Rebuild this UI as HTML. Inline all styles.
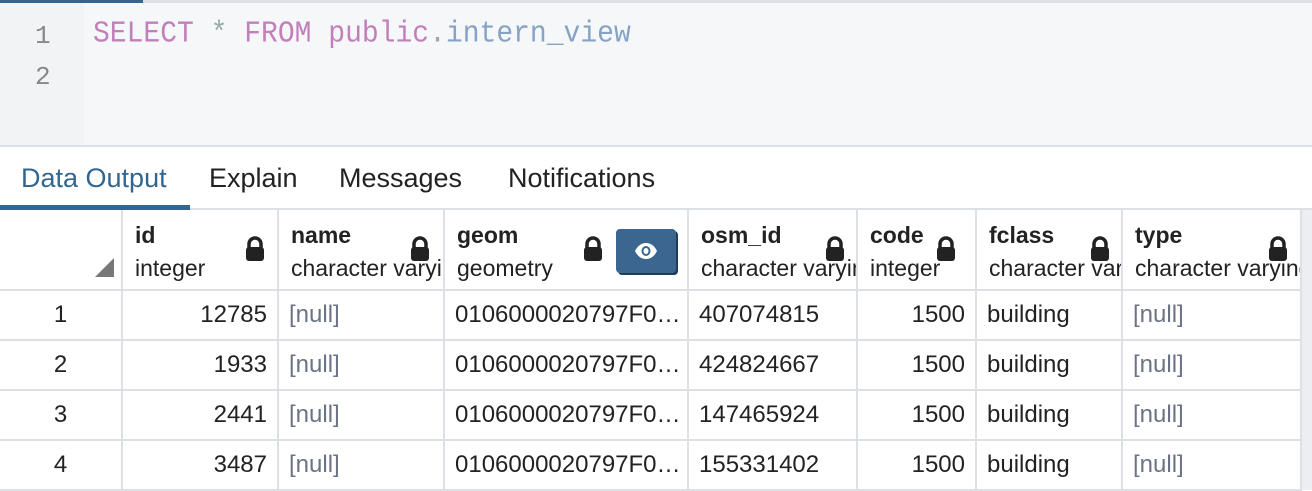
<!DOCTYPE html>
<html><head><style>
*{margin:0;padding:0;box-sizing:border-box}
body{width:1312px;height:490px;overflow:hidden;background:#fff;font-family:"Liberation Sans",sans-serif;position:relative}
#ed{position:absolute;left:0;top:0;width:1312px;height:147px;background:#f6f7f9;border-top:3px solid #dde0e5;border-bottom:2px solid #dde0e5}
#ed .topbar{position:absolute;left:0;top:-3px;width:143px;height:3px;background:#326690}
#gut{position:absolute;left:0;top:0;width:84px;height:142px;background:#f2f3f5}
.ln{position:absolute;left:35px;font:26px "Liberation Mono",monospace;color:#888}
#code{position:absolute;left:93px;top:14px;font:28px/36px "Liberation Mono",monospace;color:#9aa;white-space:pre;transform:scaleY(1.1);transform-origin:0 50%}
.kw{color:#c27fba}.id{color:#86a3c6}
#tabs{position:absolute;top:150px;left:0;width:1312px;height:60px;border-bottom:2px solid #dde0e5}
.tab{position:absolute;top:13px;font-size:27px;color:#222}
#ul{position:absolute;left:0;top:205px;width:190px;height:5px;background:#326690}
.c{position:absolute;border-right:2px solid #dde0e5;border-bottom:2px solid #dde0e5;overflow:hidden;white-space:nowrap;font-size:23px;color:#222}
.h b{position:absolute;left:12px;top:12px;font-size:23px}
.h span{position:absolute;left:12px;top:45px}
.d{line-height:48px;padding:0 10px;font-size:24px}
.r{text-align:right}.n{color:#6b7385}
.lock{position:absolute;top:236px;width:20px;height:26px}
</style></head><body>
<div id="ed"><div class="topbar"></div><div id="gut"></div>
<div class="ln" style="top:18px">1</div><div class="ln" style="top:59px">2</div>
<div id="code"><span class="kw">SELECT</span> * <span class="kw">FROM</span> <span class="kw">public</span>.<span class="id">intern_view</span></div></div>
<div id="tabs">
<div class="tab" style="left:21px;color:#326690">Data Output</div>
<div class="tab" style="left:209px">Explain</div>
<div class="tab" style="left:339px">Messages</div>
<div class="tab" style="left:508px">Notifications</div></div>
<div id="ul"></div>
<div id="tbl"></div>
<script>
const xs=[0,123,279,445,689,858,977,1123,1302];
const hs=[["",""],["id","integer"],["name","character varying"],["geom","geometry"],["osm_id","character varying"],["code","integer"],["fclass","character varying"],["type","character varying"]];
const lockx=[0,245,410,583,825,936,1090,1268];
const rows=[["1","12785","[null]","0106000020797F0…","407074815","1500","building","[null]"],
["2","1933","[null]","0106000020797F0…","424824667","1500","building","[null]"],
["3","2441","[null]","0106000020797F0…","147465924","1500","building","[null]"],
["4","3487","[null]","0106000020797F0…","155331402","1500","building","[null]"]];
let h="";
const lock=x=>`<svg class="lock" style="left:${x}px" viewBox="0 0 20 26"><path d="M4 12V8a6 6 0 0 1 12 0v4" fill="none" stroke="#222" stroke-width="3.5"/><rect x="1" y="11" width="18" height="14" rx="3" fill="#222"/></svg>`;
for(let i=0;i<8;i++){const w=xs[i+1]-xs[i];
h+=`<div class="c h" style="left:${xs[i]}px;top:210px;width:${w}px;height:81px">`+(i?`<b>${hs[i][0]}</b><span>${hs[i][1]}</span>`:`<div style="position:absolute;left:95px;top:48px;width:0;height:0;border-left:19px solid transparent;border-bottom:19px solid #777"></div>`)+`</div>`;
}
for(let i=1;i<8;i++)h+=lock(lockx[i]);
h+=`<div style="position:absolute;left:616px;top:229px;width:60px;height:44px;background:#3a6690;border-radius:4px;box-shadow:2px 2px 0 #1f3d57"><svg style="position:absolute;left:18px;top:10px" width="24" height="24" viewBox="0 0 24 24"><path d="M1 12C4 6 8 4 12 4s8 2 11 8c-3 6-7 8-11 8S4 18 1 12z" fill="#fff"/><ellipse cx="12" cy="12" rx="4.5" ry="5" fill="#3a6690"/><ellipse cx="12" cy="12" rx="2.5" ry="3" fill="#fff"/></svg></div>`;
h+=`<div style="position:absolute;left:1302px;top:210px;width:10px;height:280px;background:#eceef1"></div>`;
rows.forEach((r,j)=>{const y=291+j*50;
for(let i=0;i<8;i++){const w=xs[i+1]-xs[i];let cl="c d";
if(i==1||i==5)cl+=" r";if(r[i]=="[null]")cl+=" n";
h+=`<div class="${cl}" style="left:${xs[i]}px;top:${y}px;width:${w}px;height:50px;${i==0?'text-align:center':''}">${r[i]}</div>`;}});
document.getElementById('tbl').innerHTML=h;
</script>
</body></html>
